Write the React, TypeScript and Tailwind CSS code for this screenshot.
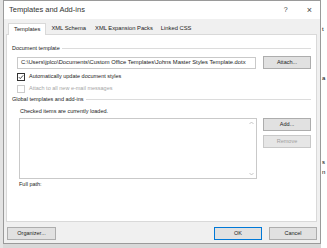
import React from "react";

const font = { fontFamily: '"Liberation Sans", Arial, sans-serif' };

function Btn({ children, className = "", disabled = false, primary = false }: { children: React.ReactNode; className?: string; disabled?: boolean; primary?: boolean }) {
  return (
    <div
      className={
        "flex items-center justify-center h-[13px] text-[5.5px] bg-[#e1e1e1] border " +
        (primary ? "border-[#0078d7] " : "border-[#adadad] ") +
        (disabled ? "text-[#a0a0a0] border-[#c8c8c8] bg-[#e6e6e6] " : "text-[#222] ") +
        className
      }
    >
      {children}
    </div>
  );
}

export default function App() {
  return (
    <div className="w-[327px] h-[248px] overflow-hidden flex bg-[#e6e6e6] text-[#222]" style={font}>
      <div className="w-[3px] bg-[#e3e3e3]" />
      <div className="w-[318px] flex flex-col">
        <div className="h-[244px] flex flex-col border border-[#9a9a9a] bg-[#f0f0f0]">
          {/* title bar */}
          <div className="h-[18px] bg-white flex items-center pl-[5px] pr-[8px]">
            <span className="text-[7.5px] text-[#333]">Templates and Add-ins</span>
            <span className="ml-auto text-[7px] text-[#444]">?</span>
            <span className="ml-[19px] text-[9px] leading-none text-[#444]">×</span>
          </div>
          {/* body */}
          <div className="flex-1 flex flex-col pl-[2px] pr-[3px]">
            {/* tabs */}
            <div className="h-[15px] flex items-end pl-[2px] text-[5.8px]">
              <div className="h-[12px] px-[5px] flex items-center bg-white border border-b-0 border-[#d9d9d9] relative top-[1px] z-10">
                Templates
              </div>
              <div className="h-[11px] px-[5px] flex items-center">XML Schema</div>
              <div className="h-[11px] px-[4px] flex items-center">XML Expansion Packs</div>
              <div className="h-[11px] px-[4px] flex items-center">Linked CSS</div>
            </div>
            {/* panel */}
            <div className="h-[188px] bg-white border border-[#d9d9d9] flex flex-col text-[5.5px] pl-[5px] pr-[5px]">
              <div className="mt-[10px] flex items-center h-[7px]">
                <span>Document template</span>
                <div className="flex-1 h-px bg-[#dcdcdc] ml-[2px]" />
              </div>
              <div className="mt-[4px] flex items-center">
                <div className="ml-[5px] w-[239px] h-[12px] border border-[#c9c9c9] flex items-center pl-[3px] text-[5.8px] whitespace-nowrap overflow-hidden">
                  C:\Users\jplco\Documents\Custom Office Templates\Johns Master Styles Template.dotx
                </div>
                <Btn className="ml-[7px] w-[48px]">Attach...</Btn>
              </div>
              <div className="mt-[3px] ml-[5px] flex items-center h-[9px]">
                <div className="w-[8px] h-[8px] border border-[#333] flex items-center justify-center">
                  <svg width="6" height="6" viewBox="0 0 6 6">
                    <path d="M0.8 3.1 L2.3 4.6 L5.2 1.3" fill="none" stroke="#222" strokeWidth="0.8" />
                  </svg>
                </div>
                <span className="ml-[4px]">Automatically update document styles</span>
              </div>
              <div className="mt-[3px] ml-[5px] flex items-center h-[9px] text-[#a6a6a6]">
                <div className="w-[8px] h-[8px] border border-[#cccccc]" />
                <span className="ml-[4px]">Attach to all new e-mail messages</span>
              </div>
              <div className="mt-[3px] flex items-center h-[7px]">
                <span>Global templates and add-ins</span>
                <div className="flex-1 h-px bg-[#dcdcdc] ml-[2px]" />
              </div>
              <div className="mt-[5px] ml-[8px] h-[7px] flex items-center">Checked items are currently loaded.</div>
              <div className="mt-[3px] flex">
                <div className="ml-[7px] w-[238px] h-[61px] border border-[#c9c9c9] flex justify-end">
                  <div className="w-[9px] flex flex-col items-center justify-between py-[2px]">
                    <svg width="5" height="4" viewBox="0 0 5 4"><path d="M0.5 3 L2.5 1 L4.5 3" fill="none" stroke="#b0b0b0" strokeWidth="0.7" /></svg>
                    <svg width="5" height="4" viewBox="0 0 5 4"><path d="M0.5 1 L2.5 3 L4.5 1" fill="none" stroke="#b0b0b0" strokeWidth="0.7" /></svg>
                  </div>
                </div>
                <div className="ml-[6px] flex flex-col">
                  <Btn className="w-[48px]">Add...</Btn>
                  <Btn className="w-[48px] mt-[4px]" disabled>Remove</Btn>
                </div>
              </div>
              <div className="mt-[2px] ml-[7px] h-[7px] flex items-center">Full path:</div>
            </div>
            {/* footer */}
            <div className="flex-1 flex items-center pl-[1px] pr-[0px] pt-[1px]">
              <Btn className="w-[49px]">Organizer...</Btn>
              <Btn className="w-[48px] ml-auto" primary>OK</Btn>
              <Btn className="w-[48px] ml-[7px]">Cancel</Btn>
            </div>
          </div>
        </div>
        <div className="flex-1 bg-[#d8d8d8]" />
      </div>
      <div className="flex-1 bg-white flex flex-col text-[6px] leading-none pl-[1px] text-black">
        <span className="mt-[26px]">t</span>
        <span className="mt-[43px]">a</span>
        <span className="mt-[78px]">s</span>
        <span className="mt-[4px]">n</span>
      </div>
    </div>
  );
}
